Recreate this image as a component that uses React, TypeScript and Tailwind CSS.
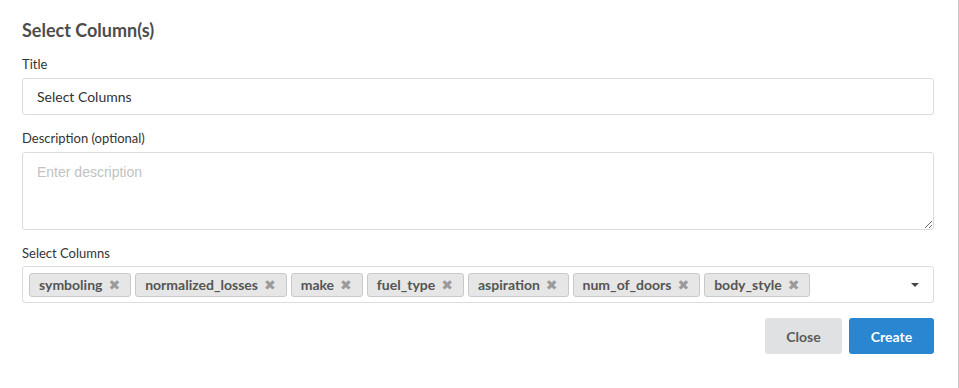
import React from "react";

const chips = [
  "symboling",
  "normalized_losses",
  "make",
  "fuel_type",
  "aspiration",
  "num_of_doors",
  "body_style",
];

export default function App() {
  return (
    <div
      className="w-[959px] h-[388px] bg-white border-r border-[#c8c8c8] pl-[22px] pr-[24px] pt-[18px]"
      style={{ fontFamily: "Lato, 'Liberation Sans', sans-serif" }}
    >
      <h2 className="text-[18px] leading-[24px] font-bold text-[#4d4d4d]">Select Column(s)</h2>

      <label className="block mt-[13px] text-[13px] leading-[18px] text-[#333]">Title</label>
      <input
        className="mt-[5px] block w-full h-[37px] border border-[#dcdcdc] rounded-[3px] px-[14px] text-[14px] text-[#333] outline-none"
        defaultValue="Select Columns"
        style={{ fontFamily: "Lato, sans-serif" }}
      />

      <label className="block mt-[14px] text-[13px] leading-[18px] text-[#333]">Description (optional)</label>
      <textarea
        className="mt-[5px] block w-full h-[78px] border border-[#dcdcdc] rounded-[3px] px-[14px] py-[9px] text-[14px] text-[#333] outline-none placeholder:text-[#c2c2c2]"
        placeholder="Enter description"
        style={{ fontFamily: "'Liberation Sans', Arial, sans-serif" }}
      />

      <label className="block mt-[14px] text-[13px] leading-[18px] text-[#333]">Select Columns</label>
      <div className="mt-[4px] h-[37px] border border-[#dcdcdc] rounded-[3px] pl-[6px] pr-[14px] flex items-center">
        <div className="flex items-center gap-[4px] flex-1">
          {chips.map((c) => (
            <span
              key={c}
              className="h-[24px] flex items-center bg-[#e6e6e6] border border-[#c9c9c9] rounded-[3px] pl-[9px] pr-[10px] text-[14px] font-bold text-[#555]"
            >
              {c}
              <span
                className="ml-[6px] text-[14px] text-[#9a9a9a] leading-none"
                style={{ fontFamily: "'DejaVu Sans', sans-serif" }}
              >
                ✖
              </span>
            </span>
          ))}
        </div>
        <span className="w-0 h-0 border-l-[4px] border-r-[4px] border-t-[4px] border-l-transparent border-r-transparent border-t-[#444]" />
      </div>

      <div className="mt-[15px] flex justify-end gap-[7px]">
        <button className="h-[36px] w-[77px] rounded-[3px] bg-[#e0e1e2] text-[14px] font-bold text-[#5a5a5a]">
          Close
        </button>
        <button className="h-[36px] w-[85px] rounded-[3px] bg-[#2a86d1] text-[14px] font-bold text-white">
          Create
        </button>
      </div>
    </div>
  );
}
